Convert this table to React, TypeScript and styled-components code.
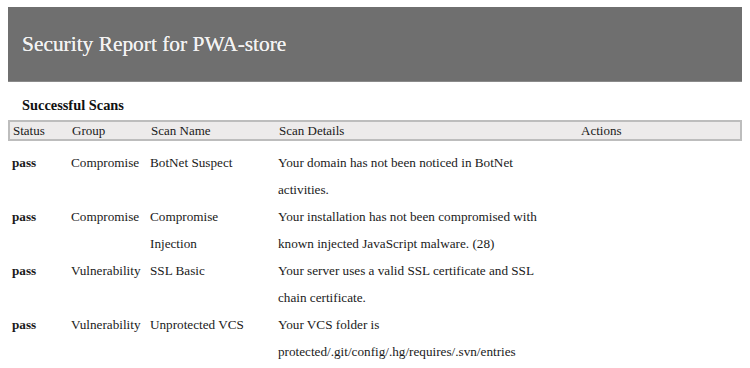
import React from "react";
import styled, { createGlobalStyle } from "styled-components";

const Global = createGlobalStyle`
  html, body { margin: 0; padding: 0; background: #ffffff; }
  body { padding: 7px 8px; font-family: "Liberation Serif", "Times New Roman", serif; color: #1a1a1a; }
`;

const Banner = styled.header`
  background: #6f6f6f;
  border-bottom: 1px solid #8a8a8a;
  height: 74px;
  display: flex;
  align-items: center;
  padding: 0 14px;
`;

const Title = styled.h1`
  margin: 0;
  font-size: 21.4px;
  font-weight: normal;
  color: #f2f2f2;
  padding-top: 0;
  text-shadow: 0 0 0.4px #f2f2f2;
`;

const SectionTitle = styled.h2`
  margin: 14px 0 0 14px;
  font-size: 14.4px;
  font-weight: bold;
  color: #111;
  line-height: 18px;
`;

const cols = "59px 79px 128px 302px 1fr";

const HeadRow = styled.div`
  display: grid;
  grid-template-columns: ${cols};
  margin-top: 6px;
  background: #edebeb;
  border: 2px solid #bdbdbd;
  height: 17px;
  align-items: center;
  font-size: 13px;
`;

const Th = styled.div`
  padding-left: 3px;
  line-height: 17px;
`;

const Body = styled.div`
  padding-top: 8px;
`;

const Row = styled.div`
  display: grid;
  grid-template-columns: ${cols};
  font-size: 13.2px;
  line-height: 27px;
  margin-left: 2px;
`;

const Cell = styled.div<{ $bold?: boolean; $wide?: boolean }>`
  padding-left: 2px;
  padding-right: ${(p) => (p.$wide ? "20px" : "12px")};
  font-weight: ${(p) => (p.$bold ? "bold" : "normal")};
`;

const rows = [
  { group: "Compromise", name: "BotNet Suspect", details: "Your domain has not been noticed in BotNet activities." },
  { group: "Compromise", name: "Compromise Injection", details: "Your installation has not been compromised with known injected JavaScript malware. (28)" },
  { group: "Vulnerability", name: "SSL Basic", details: "Your server uses a valid SSL certificate and SSL chain certificate." },
  { group: "Vulnerability", name: "Unprotected VCS", details: "Your VCS folder is protected/.git/config/.hg/requires/.svn/entries" },
];

export default function App() {
  return (
    <>
      <Global />
      <Banner>
        <Title>Security Report for PWA-store</Title>
      </Banner>
      <SectionTitle>Successful Scans</SectionTitle>
      <HeadRow>
        <Th>Status</Th>
        <Th>Group</Th>
        <Th>Scan Name</Th>
        <Th>Scan Details</Th>
        <Th>Actions</Th>
      </HeadRow>
      <Body>
        {rows.map((r) => (
          <Row key={r.name}>
            <Cell $bold>pass</Cell>
            <Cell>{r.group}</Cell>
            <Cell>{r.name}</Cell>
            <Cell $wide>{r.details}</Cell>
            <Cell />
          </Row>
        ))}
      </Body>
    </>
  );
}
